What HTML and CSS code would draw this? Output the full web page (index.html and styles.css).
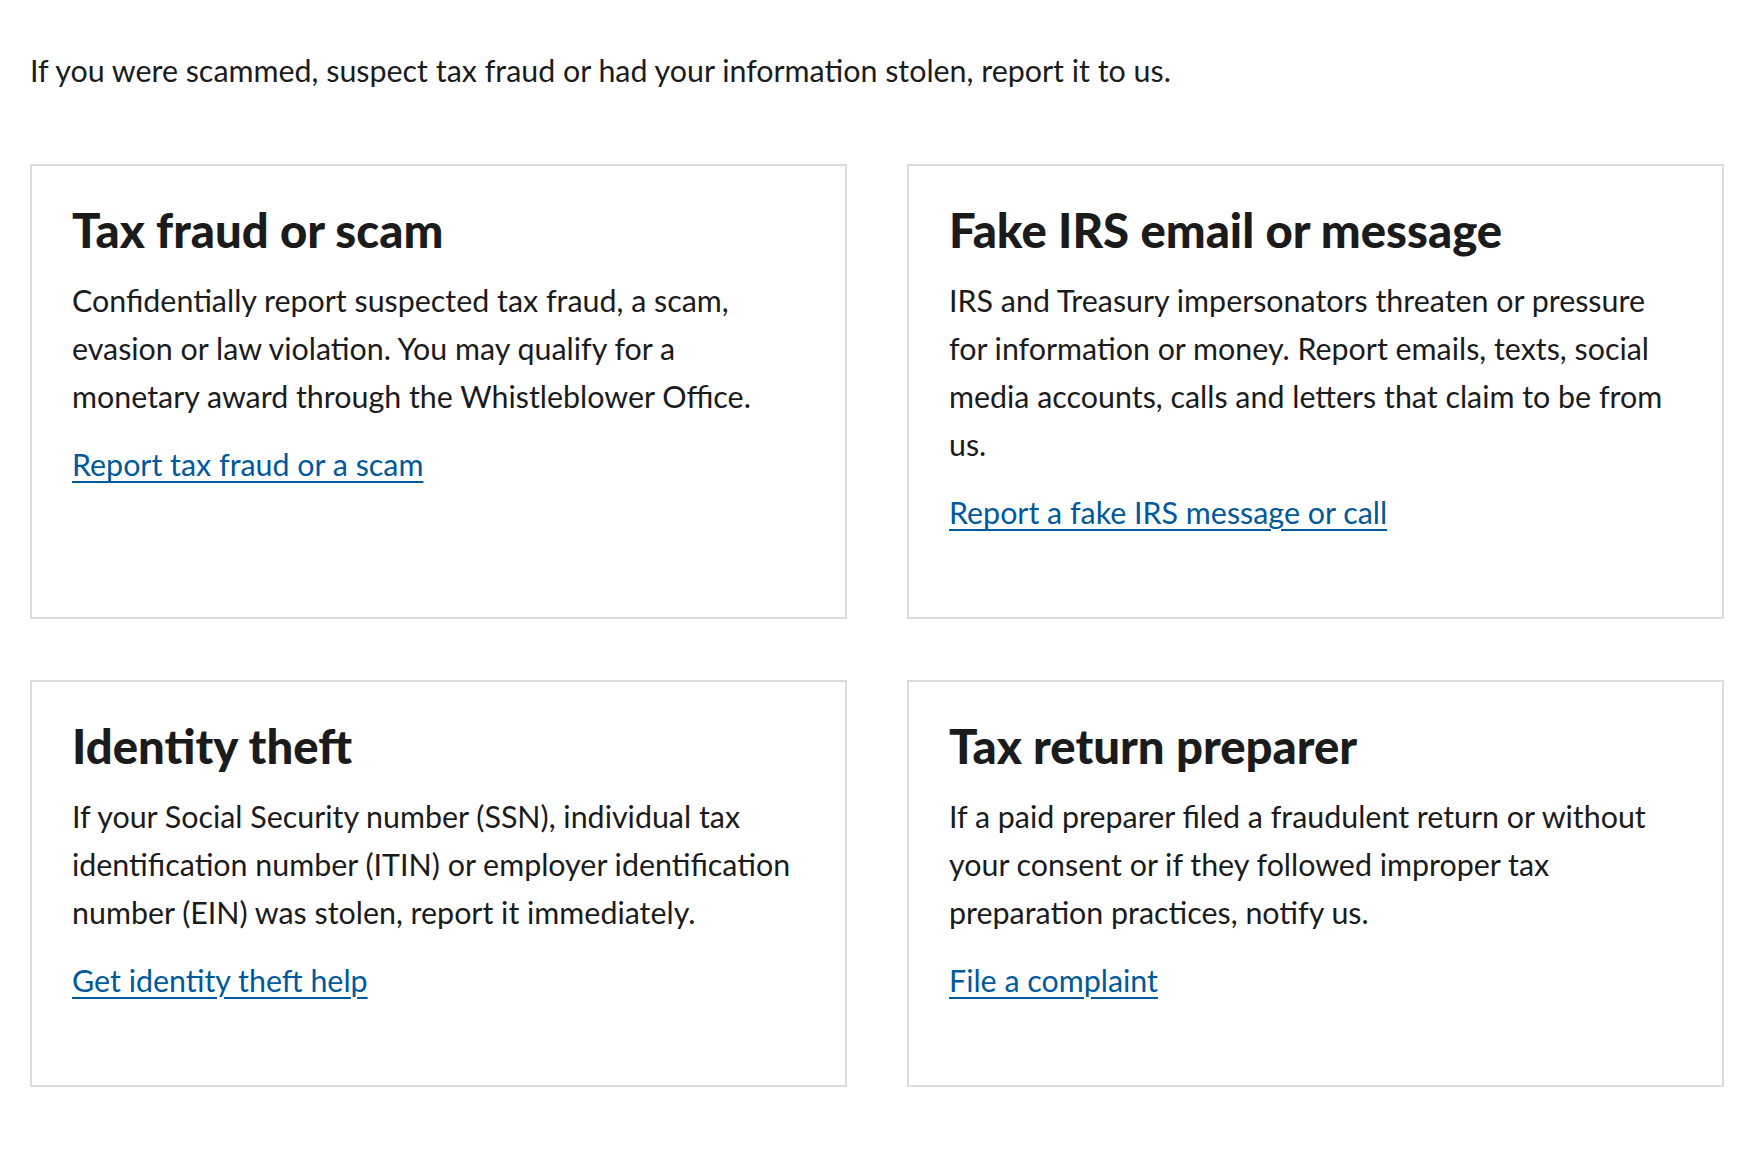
FILE: index.html
```html
<!DOCTYPE html>
<html lang="en">
<head>
	<meta charset="UTF-8">
	<meta name="viewport" content="width=device-width, initial-scale=1">

	<title>Report fraud or scams</title>

	<link rel="stylesheet" href="styles.css">
</head>
<body>
	<main class="report">

		<p class="intro">If you were scammed, suspect tax fraud or had your information stolen, report it to us.</p>

		<div class="card-grid">

			<div class="card">
				<h2>Tax fraud or scam</h2>
				<p>Confidentially report suspected tax fraud, a scam, evasion or law violation. You may qualify for a monetary award through the Whistleblower Office.</p>
				<p class="card-link"><a href="#">Report tax fraud or a scam</a></p>
			</div>

			<div class="card">
				<h2>Fake IRS email or message</h2>
				<p>IRS and Treasury impersonators threaten or pressure for information or money. Report emails, texts, social media accounts, calls and letters that claim to be from us.</p>
				<p class="card-link"><a href="#">Report a fake IRS message or call</a></p>
			</div>

			<div class="card">
				<h2>Identity theft</h2>
				<p>If your Social Security number (SSN), individual tax identification number (ITIN) or employer identification number (EIN) was stolen, report it immediately.</p>
				<p class="card-link"><a href="#">Get identity theft help</a></p>
			</div>

			<div class="card">
				<h2>Tax return preparer</h2>
				<p>If a paid preparer filed a fraudulent return or without your consent or if they followed improper tax preparation practices, notify us.</p>
				<p class="card-link"><a href="#">File a complaint</a></p>
			</div>

		</div>

	</main>
</body>
</html>
```

FILE: styles.css
```css
* {
	margin: 0;
	padding: 0;
	box-sizing: border-box;
}

body {
	background: #fff;
	color: #1b1b1b;
	font-family: Lato, "Source Sans Pro", "Liberation Sans", sans-serif;
	font-size: 30.4px;
	line-height: 48px;
}

.report {
	padding: 46px 38px 60px 30px;
}

.intro {
	margin-bottom: 70px;
}

.card-grid {
	display: grid;
	grid-template-columns: 1fr 1fr;
	column-gap: 60px;
	row-gap: 61px;
}

.card {
	border: 2px solid #dcdcdc;
	padding: 36px 44px 81px 40px;
}

.card h2 {
	font-size: 47.3px;
	font-weight: 900;
	line-height: 1.2;
	margin-bottom: 17px;
}

.card-link {
	margin-top: 20px;
}

.card-link a {
	color: #00599c;
	text-decoration: underline;
	text-decoration-thickness: 2px;
	text-underline-offset: 5px;
}
```
